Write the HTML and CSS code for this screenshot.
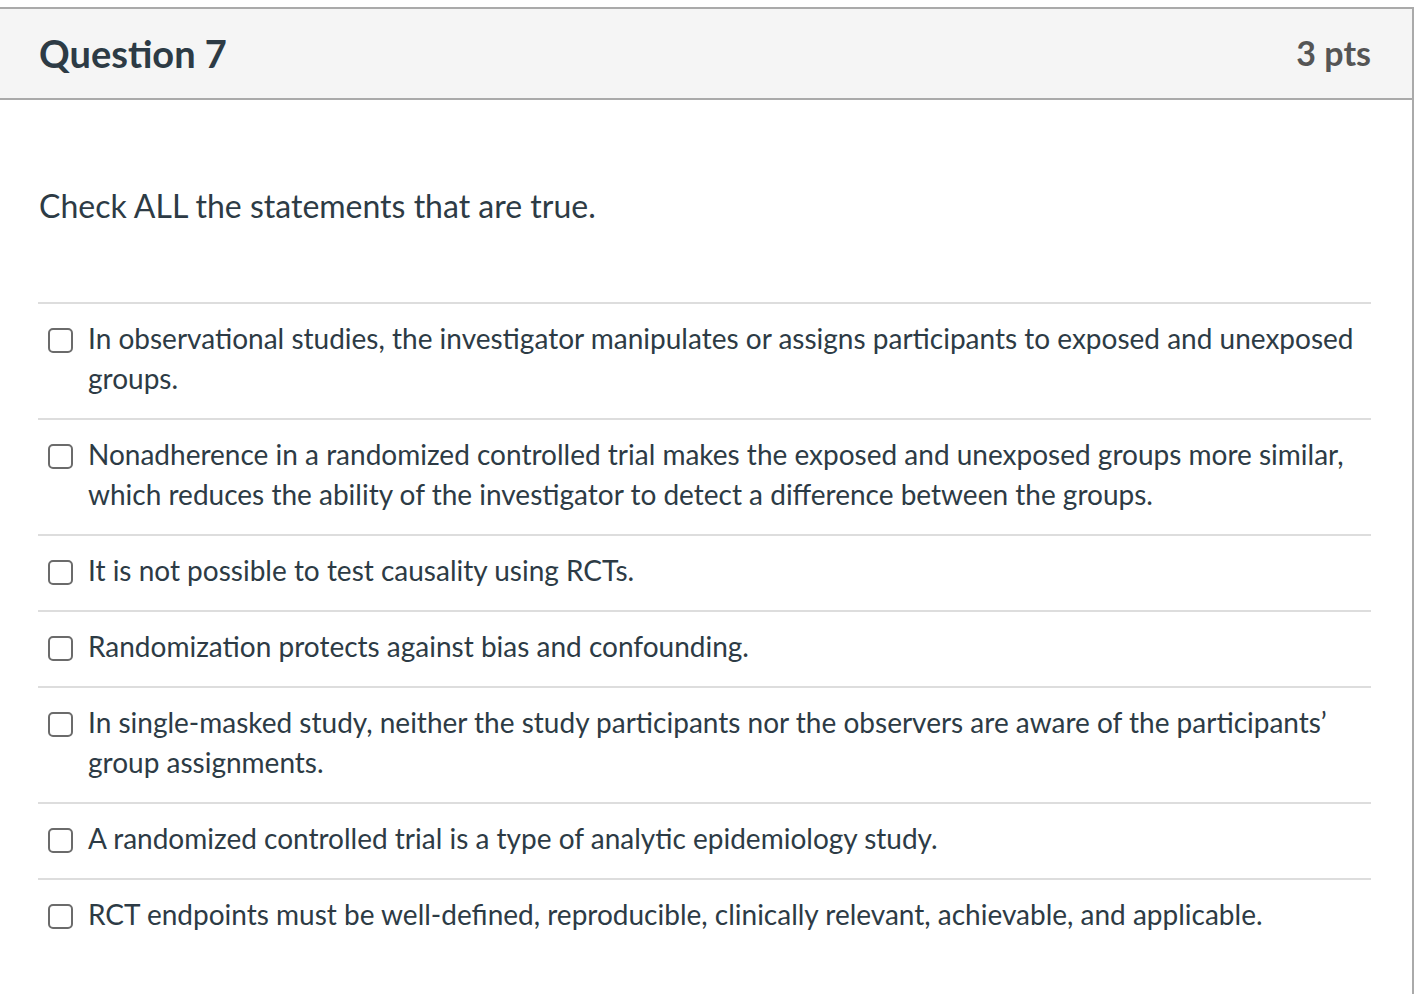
FILE: index.html
```html
<!DOCTYPE html>
<html lang="en">
<head>
  <meta charset="UTF-8">
  <title>Question 7</title>
  <link rel="stylesheet" href="styles.css">
</head>
<body>
  <div class="question">
    <div class="question-header">
      <h2>Question 7</h2>
      <span class="points">3 pts</span>
    </div>

    <div class="question-body">
      <p class="prompt">Check ALL the statements that are true.</p>

      <div class="answers">
        <label class="answer">
          <span class="box"></span>
          <span class="answer-text">In observational studies, the investigator manipulates or assigns participants to exposed and unexposed groups.</span>
        </label>
        <label class="answer">
          <span class="box"></span>
          <span class="answer-text">Nonadherence in a randomized controlled trial makes the exposed and unexposed groups more similar, which reduces the ability of the investigator to detect a difference between the groups.</span>
        </label>
        <label class="answer">
          <span class="box"></span>
          <span class="answer-text">It is not possible to test causality using RCTs.</span>
        </label>
        <label class="answer">
          <span class="box"></span>
          <span class="answer-text">Randomization protects against bias and confounding.</span>
        </label>
        <label class="answer">
          <span class="box"></span>
          <span class="answer-text">In single-masked study, neither the study participants nor the observers are aware of the participants’ group assignments.</span>
        </label>
        <label class="answer">
          <span class="box"></span>
          <span class="answer-text">A randomized controlled trial is a type of analytic epidemiology study.</span>
        </label>
        <label class="answer">
          <span class="box"></span>
          <span class="answer-text">RCT endpoints must be well-defined, reproducible, clinically relevant, achievable, and applicable.</span>
        </label>
      </div>
    </div>
  </div>
</body>
</html>
```

FILE: styles.css
```css
body {
  margin: 0;
  padding: 0;
  background-color: #fff;
  font-family: Lato, "Open Sans", sans-serif;
  color: #2d3b45;
}

.question {
  margin-top: 7px;
  width: 1412px;
  border-top: 2px solid #aaaaaa;
  border-right: 2px solid #aaaaaa;
  min-height: 1000px;
}

.question-header {
  display: flex;
  justify-content: space-between;
  align-items: center;
  box-sizing: border-box;
  height: 91px;
  padding: 0 41px 2px 39px;
  background-color: #f5f5f5;
  border-bottom: 2px solid #aaaaaa;
}

.question-header h2 {
  margin: 0;
  font-size: 38px;
  font-weight: bold;
  color: #2d3b45;
}

.points {
  font-size: 34px;
  font-weight: bold;
  color: #555555;
}

.question-body {
  padding: 0 41px 0 38px;
}

.prompt {
  margin: 0;
  padding: 86px 0 76px 1px;
  font-size: 32px;
  line-height: 40px;
}

.answer {
  display: flex;
  align-items: flex-start;
  padding: 14px 0 20px;
  border-top: 2px solid #dddddd;
  font-size: 28px;
  line-height: 40px;
}

.box {
  flex: none;
  width: 21px;
  height: 21px;
  margin: 10px 15px 0 10px;
  border: 2px solid #6b6b6b;
  border-radius: 5px;
}
```
